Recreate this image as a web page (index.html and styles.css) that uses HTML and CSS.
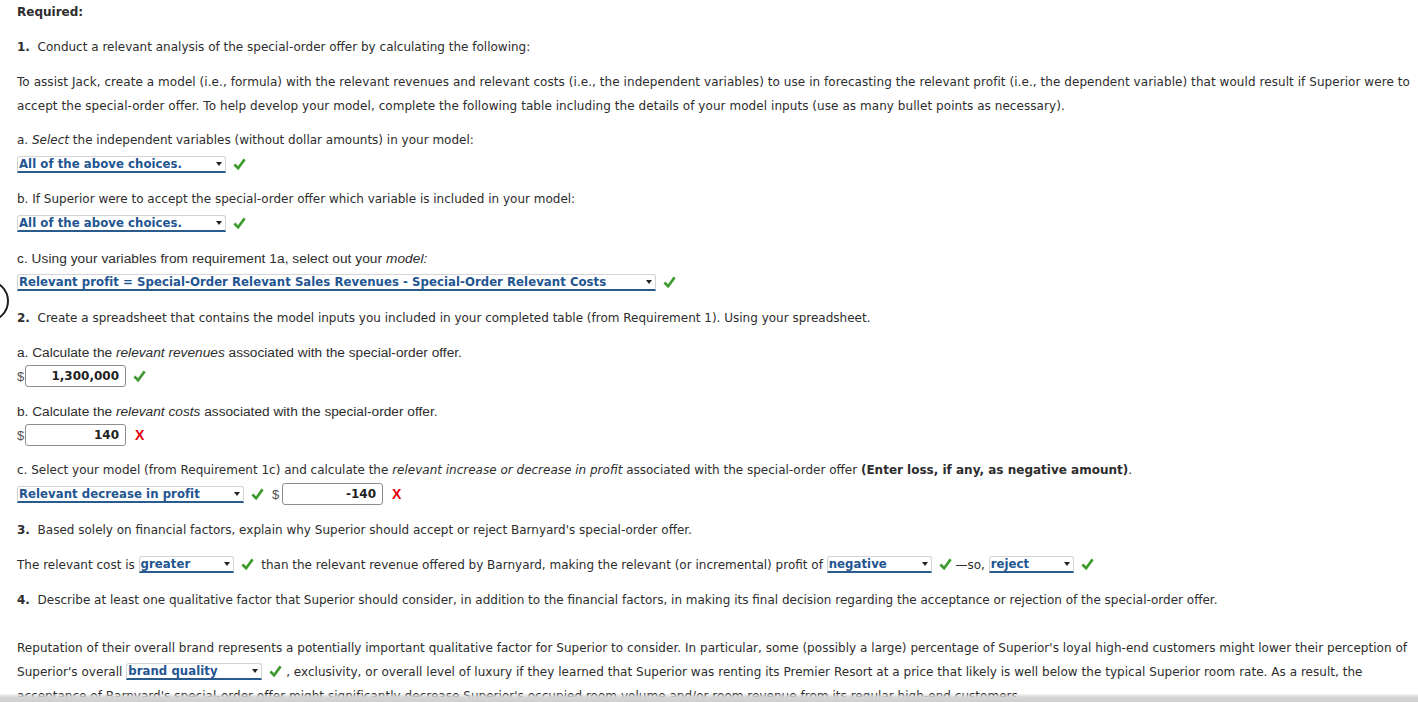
FILE: index.html
```html
<!DOCTYPE html>
<html>
<head>
<meta charset="utf-8">
<link rel="stylesheet" href="styles.css">
</head>
<body>
<div class="page">
  <div class="ring"></div>
  <p class="line b1 first"><strong>Required:</strong></p>
  <p class="line b1"><strong>1.</strong>&nbsp; Conduct a relevant analysis of the special-order offer by calculating the following:</p>
  <p class="line b1 para">To assist Jack, create a model (i.e., formula) with the relevant revenues and relevant costs (i.e., the independent variables) to use in forecasting the relevant profit (i.e., the dependent variable) that would result if Superior were to<br>accept the special-order offer. To help develop your model, complete the following table including the details of your model inputs (use as many bullet points as necessary).</p>

  <div class="q">
    <p class="label">a. <em>Select</em> the independent variables (without dollar amounts) in your model:</p>
    <div class="ctrl"><span class="dd w208"><span>All of the above choices.</span><span class="arr"></span></span><svg class="ok" viewBox="0 0 14 14"><path d="M1.5 7.5 L5.5 11.5 L12.5 2"/></svg></div>
  </div>

  <div class="q">
    <p class="label">b. If Superior were to accept the special-order offer which variable is included in your model:</p>
    <div class="ctrl"><span class="dd w208"><span>All of the above choices.</span><span class="arr"></span></span><svg class="ok" viewBox="0 0 14 14"><path d="M1.5 7.5 L5.5 11.5 L12.5 2"/></svg></div>
  </div>

  <div class="q">
    <p class="label alt2">c. Using your variables from requirement 1a, select out your <em>model:</em></p>
    <div class="ctrl"><span class="dd w638"><span>Relevant profit = Special-Order Relevant Sales Revenues - Special-Order Relevant Costs</span><span class="arr"></span></span><svg class="ok" viewBox="0 0 14 14"><path d="M1.5 7.5 L5.5 11.5 L12.5 2"/></svg></div>
  </div>

  <p class="line b1"><strong>2.</strong>&nbsp; Create a spreadsheet that contains the model inputs you included in your completed table (from Requirement 1). Using your spreadsheet.</p>

  <div class="q">
    <p class="label alt">a. Calculate the <em>relevant revenues</em> associated with the special-order offer.</p>
    <div class="ctrl"><span class="dollar">$</span><span class="inp">1,300,000</span><svg class="ok" viewBox="0 0 14 14"><path d="M1.5 7.5 L5.5 11.5 L12.5 2"/></svg></div>
  </div>

  <div class="q">
    <p class="label alt">b. Calculate the <em>relevant costs</em> associated with the special-order offer.</p>
    <div class="ctrl"><span class="dollar">$</span><span class="inp">140</span><span class="bad">X</span></div>
  </div>

  <div class="q">
    <p class="label">c. Select your model (from Requirement 1c) and calculate the <em>relevant increase or decrease in profit</em> associated with the special-order offer <strong>(Enter loss, if any, as negative amount)</strong>.</p>
    <div class="ctrl"><span class="dd w226"><span>Relevant decrease in profit</span><span class="arr"></span></span><svg class="ok" viewBox="0 0 14 14"><path d="M1.5 7.5 L5.5 11.5 L12.5 2"/></svg><span class="dollar sp">$</span><span class="inp">-140</span><span class="bad">X</span></div>
  </div>

  <p class="line b1"><strong>3.</strong>&nbsp; Based solely on financial factors, explain why Superior should accept or reject Barnyard's special-order offer.</p>

  <p class="line b1 inl">The relevant cost is <span class="dd w94"><span>greater</span><span class="arr"></span></span><svg class="ok" viewBox="0 0 14 14"><path d="M1.5 7.5 L5.5 11.5 L12.5 2"/></svg>&nbsp; than the relevant revenue offered by Barnyard, making the relevant (or incremental) profit of <span class="dd w104"><span>negative</span><span class="arr"></span></span><svg class="ok" viewBox="0 0 14 14"><path d="M1.5 7.5 L5.5 11.5 L12.5 2"/></svg> —so, <span class="dd w84"><span>reject</span><span class="arr"></span></span><svg class="ok" viewBox="0 0 14 14"><path d="M1.5 7.5 L5.5 11.5 L12.5 2"/></svg></p>

  <p class="line b4"><strong>4.</strong>&nbsp; Describe at least one qualitative factor that Superior should consider, in addition to the financial factors, in making its final decision regarding the acceptance or rejection of the special-order offer.</p>

  <p class="line para2 inl">Reputation of their overall brand represents a potentially important qualitative factor for Superior to consider. In particular, some (possibly a large) percentage of Superior's loyal high-end customers might lower their perception of<br>Superior's overall <span class="dd w135"><span>brand quality</span><span class="arr"></span></span><svg class="ok" viewBox="0 0 14 14"><path d="M1.5 7.5 L5.5 11.5 L12.5 2"/></svg> , exclusivity, or overall level of luxury if they learned that Superior was renting its Premier Resort at a price that likely is well below the typical Superior room rate. As a result, the<br>acceptance of Barnyard's special-order offer might significantly decrease Superior's occupied room volume and/or room revenue from its regular high-end customers.</p>
</div>
<div class="shade"></div>
</body>
</html>
```

FILE: styles.css
```css
html, body {
  margin: 0;
  padding: 0;
  background: #ffffff;
  overflow: hidden;
}

.page {
  position: relative;
  padding: 0 0 0 17px;
  font-family: "DejaVu Sans", Verdana, sans-serif;
  font-size: 12px;
  color: #2d2d2d;
  display: flex;
  flex-direction: column;
  align-items: flex-start;
}

p {
  margin: 0;
}

.line {
  line-height: 24px;
  white-space: nowrap;
}

.para {
  letter-spacing: 0.06px;
}

.para2 {
  letter-spacing: 0.03px;
}

.b1 {
  margin-bottom: 11px;
}

.b4 {
  margin-bottom: 24px;
}

.q {
  display: flex;
  flex-direction: column;
  margin-bottom: 12px;
}

.label {
  line-height: 23px;
  white-space: nowrap;
}

.label.alt {
  font-family: "Liberation Sans", Arial, sans-serif;
  font-size: 13.7px;
}

.label.alt2 {
  font-family: "Liberation Sans", Arial, sans-serif;
  font-size: 13.7px;
  letter-spacing: 0.05px;
}

.ctrl {
  height: 24px;
  display: flex;
  align-items: center;
}

.dd {
  display: inline-flex;
  align-items: center;
  justify-content: space-between;
  box-sizing: border-box;
  height: 17px;
  padding: 0 3px 0 1px;
  border: 1px solid #d4d4d4;
  border-bottom: 2px solid #2b5a8c;
  border-radius: 3px 3px 0 0;
  font-family: "DejaVu Sans Condensed", "DejaVu Sans", sans-serif;
  font-weight: bold;
  font-size: 13px;
  letter-spacing: 0.05px;
  color: #1f5591;
  line-height: 14px;
}

.inl .dd {
  vertical-align: 1px;
}

.dd .arr {
  width: 0;
  height: 0;
  border-left: 3.5px solid transparent;
  border-right: 3.5px solid transparent;
  border-top: 4px solid #222;
  margin-left: 4px;
}

.w208 { width: 209px; }
.w638 { width: 639px; }
.w226 { width: 227px; }
.w94 { width: 95px; }
.w104 { width: 105px; }
.w84 { width: 85px; }
.w135 { width: 136px; }

.ok {
  width: 13px;
  height: 14px;
  margin-left: 7px;
  fill: none;
  stroke: #3d9a2e;
  stroke-width: 2.8;
  vertical-align: -2px;
}

.dollar {
  font-family: "Liberation Sans", Arial, sans-serif;
  font-size: 13px;
  color: #555;
  width: 8px;
}

.dollar.sp {
  margin-left: 8px;
  width: 10px;
}

.inp {
  display: inline-flex;
  align-items: center;
  justify-content: flex-end;
  box-sizing: border-box;
  width: 101px;
  height: 22px;
  padding-right: 6px;
  border: 1px solid #8e8e8e;
  border-radius: 3px;
  font-weight: bold;
  font-size: 12px;
  color: #222;
}

.bad {
  font-family: "Liberation Sans", Arial, sans-serif;
  font-weight: bold;
  font-size: 14px;
  color: #e4000b;
  margin-left: 9px;
}

.ring {
  position: absolute;
  left: -33px;
  top: 280px;
  width: 38px;
  height: 38px;
  border: 2.8px solid #1e1e1e;
  border-radius: 50%;
}

.shade {
  position: fixed;
  left: 0;
  right: 0;
  bottom: 0;
  height: 8px;
  background: linear-gradient(to bottom, rgba(200,200,200,0.2), #d6d6d6 40%, #cfcfcf);
}
```
